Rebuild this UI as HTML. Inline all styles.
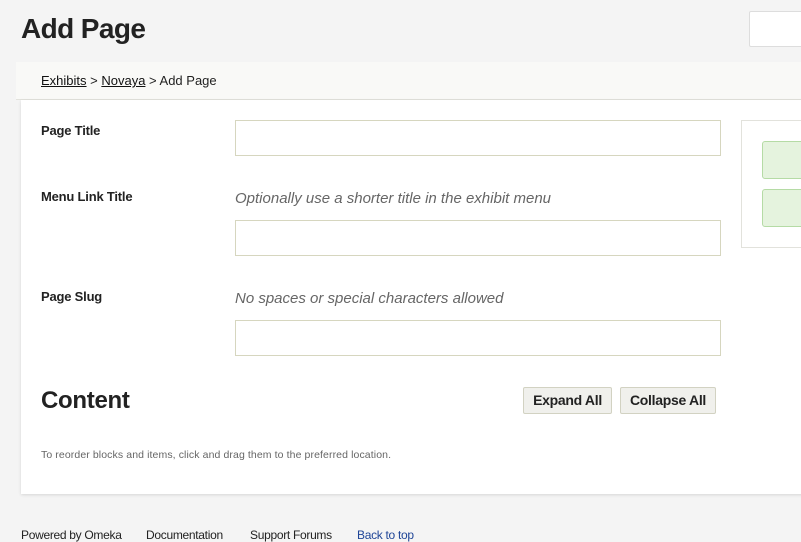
<!DOCTYPE html>
<html><head><meta charset="utf-8"><style>
*{box-sizing:border-box;margin:0;padding:0}
body{width:801px;height:538px;overflow:hidden;background:#f4f4f4;font-family:"Liberation Sans",sans-serif;color:#222;position:relative}
.a{position:absolute}
h1{position:absolute;left:21px;top:13px;font-size:28px;font-weight:bold;letter-spacing:-0.6px;color:#222}
.topbox{left:749px;top:11px;width:60px;height:36px;background:#fff;border:1px solid #ddd;border-radius:2px}
.crumb{left:16px;top:62px;width:800px;height:38px;background:#f9f9f7;border-bottom:1px solid #e2e2dc;font-size:13px;padding:11px 0 0 25px}
.crumb u{color:#111}
.panel{left:21px;top:100px;width:790px;height:394px;background:#fff;box-shadow:0 1px 3px rgba(0,0,0,.12)}
.lbl{font-size:13px;font-weight:bold;left:41px;letter-spacing:-0.2px}
.in{left:235px;width:486px;height:36px;border:1px solid #d6d6bf;background:#fff}
.hint{left:235px;font-size:15px;font-style:italic;color:#666;letter-spacing:0}
.side{left:741px;top:120px;width:70px;height:128px;border:1px solid #e2e2dc;background:#fff}
.g{left:762px;width:60px;height:38px;background:#e5f3de;border:1px solid #b5dba5;border-radius:3px}
.btn{top:387px;height:27px;background:#f0f0ec;border:1px solid #d2d2c2;border-radius:2px;font-size:14px;font-weight:bold;text-align:center;line-height:25px;letter-spacing:-0.3px}
.ft{top:528px;font-size:12px;color:#222;letter-spacing:-0.3px}
</style></head><body>
<h1>Add Page</h1>
<div class="a topbox"></div>
<div class="a crumb"><u>Exhibits</u> &gt; <u>Novaya</u> &gt; Add Page</div>
<div class="a panel"></div>
<div class="a lbl" style="top:123px">Page Title</div>
<div class="a in" style="top:120px"></div>
<div class="a lbl" style="top:189px">Menu Link Title</div>
<div class="a hint" style="top:190px">Optionally use a shorter title in the exhibit menu</div>
<div class="a in" style="top:220px"></div>
<div class="a lbl" style="top:289px">Page Slug</div>
<div class="a hint" style="top:290px">No spaces or special characters allowed</div>
<div class="a in" style="top:320px"></div>
<div class="a side"></div>
<div class="a g" style="top:141px"></div>
<div class="a g" style="top:189px"></div>
<div class="a" style="left:41px;top:387px;font-size:24px;font-weight:bold;letter-spacing:-0.3px">Content</div>
<div class="a btn" style="left:523px;width:89px">Expand All</div>
<div class="a btn" style="left:620px;width:96px">Collapse All</div>
<div class="a" style="left:41px;top:449px;font-size:10.5px;color:#666;letter-spacing:0.1px">To reorder blocks and items, click and drag them to the preferred location.</div>
<div class="a ft" style="left:21px">Powered by Omeka</div>
<div class="a ft" style="left:146px">Documentation</div>
<div class="a ft" style="left:250px">Support Forums</div>
<div class="a ft" style="left:357px;color:#1f4597">Back to top</div>
</body></html>
